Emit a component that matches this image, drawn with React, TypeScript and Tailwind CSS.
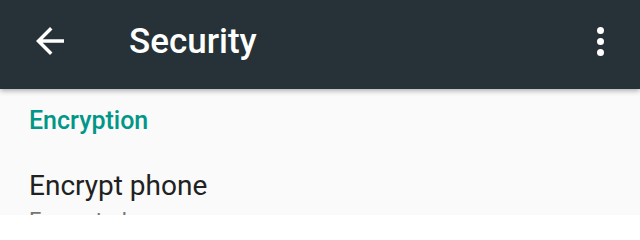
/**
 * Security settings screen (Android material look)
 */
function BackArrow() {
  return (
    <svg width="28" height="28" viewBox="4 4 16 16" fill="white">
      <path d="M20 11H7.83l5.59-5.59L12 4l-8 8 8 8 1.41-1.41L7.83 13H20v-2z" />
    </svg>
  );
}

export default function App() {
  return (
    <div
      className="w-[640px] h-[215px] overflow-hidden bg-[#fafafa]"
      style={{ fontFamily: 'Roboto, "Liberation Sans", sans-serif' }}
    >
      {/* Toolbar */}
      <div className="relative z-10 flex h-[89px] items-center bg-[#263238] pb-[7px] pl-[36px] pr-[36px] shadow-[0_2px_5px_rgba(0,0,0,0.3)]">
        <BackArrow />
        <h1 className="ml-[65px] flex-1 text-[35px] font-medium leading-[35px] text-white">
          Security
        </h1>
        <div className="flex flex-col items-center gap-[4px]">
          <span className="h-[7px] w-[7px] rounded-full bg-white" />
          <span className="h-[7px] w-[7px] rounded-full bg-white" />
          <span className="h-[7px] w-[7px] rounded-full bg-white" />
        </div>
      </div>

      {/* Content */}
      <div className="pl-[29px]">
        <div className="mt-[19px] text-[25px] font-medium leading-[25px] text-[#009688]">
          Encryption
        </div>
        <div className="mt-[39px] text-[28px] leading-[28px] text-[#212121]">
          Encrypt phone
        </div>
        <div className="mt-[10px] text-[22px] leading-[22px] text-[#757575]">
          Encrypted
        </div>
      </div>
    </div>
  );
}
